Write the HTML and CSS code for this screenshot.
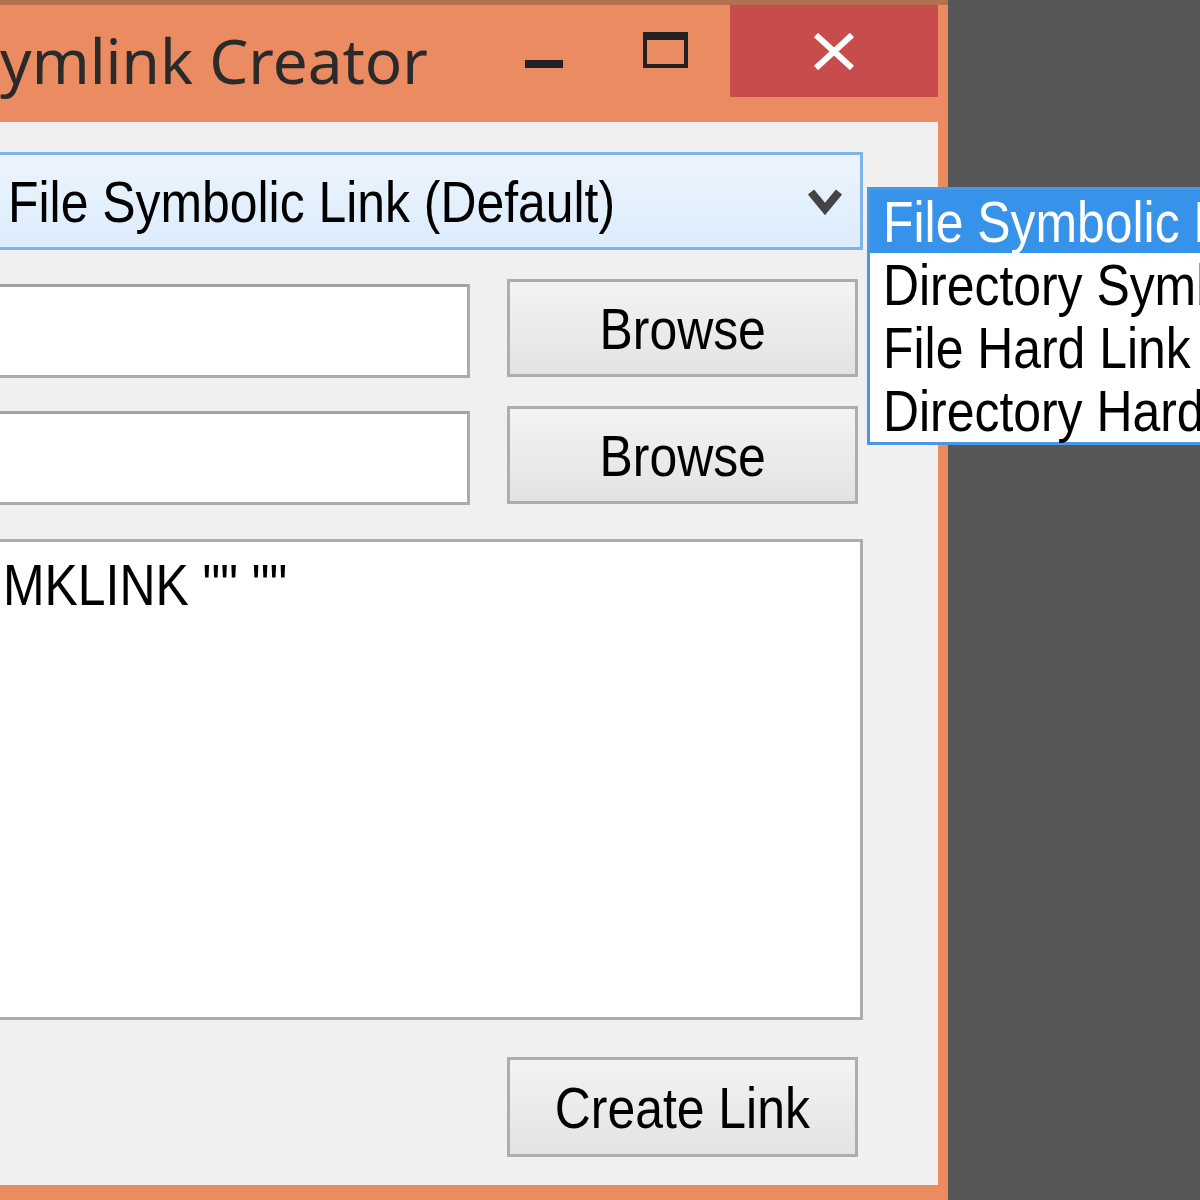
FILE: index.html
```html
<!DOCTYPE html>
<html lang="en">
<head>
  <meta charset="UTF-8" />
  <title>Symlink Creator</title>
  <link rel="stylesheet" href="styles.css">
</head>
<body>
  <div class="window">
    <div class="titlebar">
      <span class="title">Symlink Creator</span>
      <span class="tb-min"></span>
      <span class="tb-max"></span>
      <span class="tb-close">
        <svg width="42" height="37" viewBox="0 0 42 37">
          <path d="M3 2 L39 35 M39 2 L3 35" stroke="#fff" stroke-width="6" fill="none" />
        </svg>
      </span>
    </div>

    <div class="client">
      <div class="combo">
        <span class="label">File Symbolic Link (Default)</span>
        <svg class="chevron" width="36" height="29" viewBox="0 0 36 29">
          <path d="M4 5 L18 22 L32 5" stroke="#444" stroke-width="8" fill="none" />
        </svg>
      </div>

      <div class="path-row">
        <div class="textbox"></div>
        <button class="btn"><span class="label">Browse</span></button>
      </div>

      <div class="path-row">
        <div class="textbox"></div>
        <button class="btn"><span class="label">Browse</span></button>
      </div>

      <div class="output"><span class="label">MKLINK "" ""</span></div>

      <div class="actions">
        <button class="btn"><span class="label">Create Link</span></button>
      </div>
    </div>
  </div>

  <ul class="dropdown">
    <li class="selected"><span class="label">File Symbolic Link (Default)</span></li>
    <li><span class="label">Directory Symbolic Link</span></li>
    <li><span class="label">File Hard Link</span></li>
    <li><span class="label">Directory Hard Link</span></li>
  </ul>
</body>
</html>
```

FILE: styles.css
```css
body {
  margin: 0;
  width: 1200px;
  height: 1200px;
  overflow: hidden;
  position: relative;
  background-color: #575757;
  font-family: 'Liberation Sans', Arial, sans-serif;
}

/* win32 text is narrow, squeeze the glyphs instead of the gaps */
.label {
  display: inline-block;
  white-space: nowrap;
  transform: scaleX(0.86);
  transform-origin: left center;
}

.window {
  box-sizing: border-box;
  margin-left: -100px;
  width: 1048px;
  height: 1200px;
  display: flex;
  flex-direction: column;
  background-color: #ea8b61;
  border-top: 5px solid #b5714f;
  padding: 0 10px 15px 0;
}

.titlebar {
  height: 117px;
  display: flex;
  align-items: flex-start;
}

.title {
  flex: 1;
  margin: 24px 0 0 66px;
  font-family: 'Noto Sans', 'Open Sans', sans-serif;
  font-size: 62px;
  line-height: 62px;
  color: #2a2a2a;
  white-space: nowrap;
}

.tb-min {
  width: 38px;
  height: 8px;
  margin: 55px 80px 0 0;
  background-color: #222;
}

.tb-max {
  box-sizing: border-box;
  width: 45px;
  height: 36px;
  margin: 27px 42px 0 0;
  border: 4px solid #222;
  border-top-width: 8px;
}

.tb-close {
  width: 208px;
  height: 92px;
  display: flex;
  align-items: center;
  justify-content: center;
  background-color: #c94c4c;
}

.client {
  flex: 1;
  background-color: #f0f0f0;
  padding: 30px 75px 0 80px;
}

.combo {
  box-sizing: border-box;
  height: 98px;
  display: flex;
  align-items: center;
  justify-content: space-between;
  padding: 0 17px 0 25px;
  border: 3px solid #7eb4ea;
  background: linear-gradient(#ecf4fc, #dcecfc);
  font-size: 58px;
  color: #000;
}

.combo .label {
  flex: 1;
}

.path-row {
  display: flex;
  align-items: flex-start;
  margin-top: 29px;
}

.path-row + .path-row {
  margin-top: 28px;
}

.textbox {
  box-sizing: border-box;
  width: 490px;
  height: 94px;
  margin-top: 5px;
  background-color: #fff;
  border: 3px solid #ababab;
  border-top-color: #a2a2a2;
}

.btn {
  box-sizing: border-box;
  width: 351px;
  height: 98px;
  margin-left: 37px;
  border: 3px solid #adadad;
  background: linear-gradient(#f3f3f3, #e3e3e3);
  font-family: 'Liberation Sans', Arial, sans-serif;
  font-size: 58px;
  color: #000;
  padding: 0;
}

.btn .label {
  transform-origin: center;
}

.output {
  box-sizing: border-box;
  height: 481px;
  margin-top: 34px;
  padding: 9px 0 0 20px;
  background-color: #fff;
  border: 3px solid #adadad;
  font-size: 58px;
  color: #000;
}

.actions {
  display: flex;
  justify-content: flex-end;
  margin-top: 37px;
}

.actions .btn {
  height: 100px;
  margin-right: 5px;
}

.dropdown {
  position: absolute;
  left: 867px;
  top: 187px;
  box-sizing: border-box;
  width: 420px;
  height: 258px;
  margin: 0;
  padding: 0;
  list-style: none;
  background-color: #fff;
  border: 3px solid #4a97e4;
  font-size: 58px;
  color: #000;
}

.dropdown li {
  height: 63px;
  line-height: 63px;
  padding-left: 13px;
  white-space: nowrap;
}

.dropdown .selected {
  background-color: #3793ea;
  color: #fff;
}
```
